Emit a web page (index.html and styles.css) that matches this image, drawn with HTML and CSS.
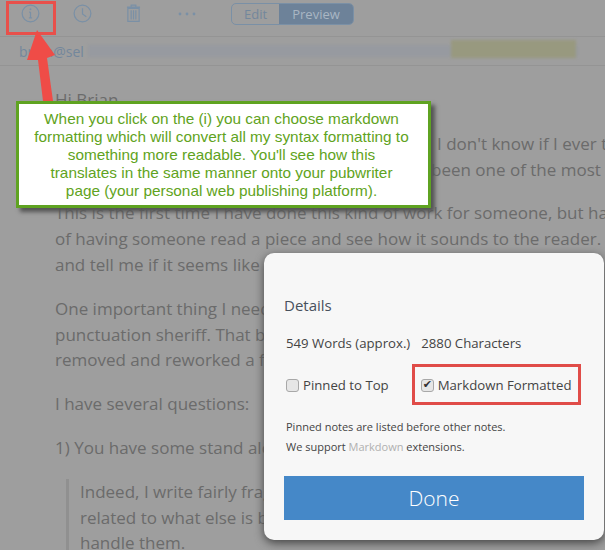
FILE: index.html
```html
<!DOCTYPE html>
<html lang="en">
<head>
  <meta charset="UTF-8" />
  <title>Note details</title>
  <link rel="stylesheet" href="styles.css">
</head>
<body>
  <div class="page">
    <!-- toolbar -->
    <div class="toolbar">
      <svg class="icon icon-info" viewBox="0 0 20 20"><circle cx="10" cy="10" r="8.8"/><path d="M10 8.5v6M8.3 14.5h3.4M8.5 8.5H10"/><circle class="dot" cx="10" cy="5.6" r="1"/></svg>
      <svg class="icon icon-clock" viewBox="0 0 20 20"><circle cx="10" cy="10" r="8.8"/><path d="M10 4.5V10.5L14 13.5"/></svg>
      <svg class="icon icon-trash" viewBox="0 0 16 20"><path d="M2 4.5h12V18.5H2zM1 3.2h14M5.5 3V1h5v2M5.5 6.5v10M8 6.5v10M10.5 6.5v10"/></svg>
      <svg class="icon icon-more" viewBox="0 0 18 4"><circle class="dot" cx="2" cy="2" r="1.4"/><circle class="dot" cx="9" cy="2" r="1.4"/><circle class="dot" cx="16" cy="2" r="1.4"/></svg>
      <div class="switch">
        <span class="switch-item">Edit</span>
        <span class="switch-item active">Preview</span>
      </div>
    </div>

    <!-- recipient row, address blurred out -->
    <div class="address">
      <span>brian@sel</span>
      <div class="smudge"><div class="highlight"></div></div>
    </div>

    <div class="note">
      <p>Hi Brian</p>
      <p><span class="tail">I don't know if I ever t</span><br><span class="tail tail-wide">been one of the most t</span></p>
      <p>This is the first time I have done this kind of work for someone, but ha<br>of having someone read a piece and see how it sounds to the reader.<br>and tell me if it seems like</p>
      <p>One important thing I need<br>punctuation sheriff. That be<br>removed and reworked a few</p>
      <p>I have several questions:</p>
      <p>1) You have some stand alone</p>
      <blockquote>Indeed, I write fairly fragmented<br>related to what else is being<br>handle them.</blockquote>
    </div>

    <!-- annotations on top of the screenshot -->
    <div class="mark mark-icon"></div>
    <svg class="arrow" viewBox="0 0 60 80"><path d="M37 30L55 55L47 58L53 101H43L38 60L27 60Z" transform="translate(0 -30)"/></svg>
    <div class="callout">When you click on the (i) you can choose markdown<br>formatting which will convert all my syntax formatting to<br>something more readable. You'll see how this<br>translates in the same manner onto your pubwriter<br>page (your personal web publishing platform).</div>

    <div class="modal">
      <h3>Details</h3>
      <div class="stats"><span>549 Words (approx.)</span><span>2880 Characters</span></div>
      <div class="options">
        <label class="option"><input type="checkbox">Pinned to Top</label>
        <label class="option option-marked"><input type="checkbox" checked>Markdown Formatted</label>
      </div>
      <div class="hint">Pinned notes are listed before other notes.<br>We support <a href="#">Markdown</a> extensions.</div>
      <button class="done">Done</button>
    </div>
  </div>
</body>
</html>
```

FILE: styles.css
```css
html, body { margin: 0; padding: 0; }
body { width: 605px; height: 550px; overflow: hidden; background: #9e9e9e; font-family: "Open Sans", sans-serif; }
.page { position: relative; width: 605px; height: 550px; overflow: hidden; }

.toolbar { display: flex; align-items: center; height: 37px; box-sizing: border-box; padding: 0 0 9px 21px; border-bottom: 1px solid #949494; }
.icon { fill: none; stroke: #7a90a6; stroke-width: 1.3; flex: none; }
.icon .dot { fill: #7a90a6; stroke: none; }
.icon-info, .icon-clock { width: 19px; height: 19px; }
.icon-clock { margin-left: 33px; }
.icon-trash { width: 15px; height: 19px; margin-left: 34px; }
.icon-more { width: 18px; height: 4px; margin-left: 37px; }
.switch { display: flex; margin-left: 35px; height: 22px; box-sizing: border-box; border: 1px solid #7a90a6; border-radius: 5px; overflow: hidden; font-size: 13px; line-height: 20px; }
.switch-item { width: 47px; text-align: center; color: #73879c; }
.switch-item.active { width: 74px; background: #6d8299; color: #a9b6c3; }

.address { display: flex; align-items: center; height: 28px; padding-left: 19px; border-bottom: 1px solid #949494; font-size: 14px; color: #73879c; }
.smudge { position: relative; flex: none; width: 490px; height: 12px; margin-left: 4px; background: #979aa0; filter: blur(1.5px); }
.highlight { position: absolute; left: 363px; top: -5px; width: 125px; height: 18px; background: #98997f; }

.note { padding: 21px 0 0 55px; font-size: 17px; line-height: 25.8px; color: #6b6b6b; white-space: nowrap; }
.note p { margin: 0 0 18px; }
.tail { padding-left: 382px; }
.tail-wide { padding-left: 376px; }
.note blockquote { margin: 0 0 0 11px; padding-left: 11px; border-left: 3px solid #909090; }

.mark { position: absolute; box-sizing: border-box; border: 3px solid #e8504b; }
.mark-icon { left: 6px; top: 1px; width: 50px; height: 34px; }
.arrow { position: absolute; left: 0; top: 30px; width: 60px; height: 80px; fill: #ef4c47; }

.callout { position: absolute; left: 16px; top: 101px; width: 415px; height: 107px; box-sizing: border-box; padding: 6px 4px 0 0; border: 3px solid #5fa321; background: #fff; box-shadow: 4px 4px 4px #555; color: #5fa321; font-family: "Liberation Sans", sans-serif; font-size: 15.35px; line-height: 18px; text-align: center; }

.modal { position: absolute; left: 264px; top: 253px; width: 340px; height: 287px; box-sizing: border-box; padding: 42px 20px 0; background: #f7f7f7; border-radius: 10px; box-shadow: 0 3px 10px #444; color: #444; }
.modal h3 { margin: 0; font-size: 15px; line-height: 20px; font-weight: 400; color: #47505c; }
.stats { display: flex; gap: 11px; margin: 18px 0 0 2px; font-size: 13.2px; line-height: 20px; }
.options { display: flex; margin-top: 22px; font-size: 13.2px; line-height: 20px; }
.option { display: flex; align-items: center; margin-left: 2px; }
.option input { appearance: none; position: relative; box-sizing: border-box; width: 13px; height: 13px; margin: 0 4px 0 0; border: 1px solid #a8a8a8; border-radius: 3px; background: #e6e6e6; }
.option input:checked::after { content: "\2714"; position: absolute; left: 1px; top: -3px; font-family: "DejaVu Sans", sans-serif; font-size: 11px; line-height: 16px; color: #333; }
.option-marked { position: relative; margin-left: 32px; }
.option-marked::after { content: ""; position: absolute; left: -9px; top: -11px; right: -10px; bottom: -10px; border: 3px solid #e04c48; }
.hint { margin: 22px 0 0 2px; font-size: 11px; line-height: 20px; }
.hint a { color: #b0b0b0; text-decoration: none; }
.done { display: block; width: 300px; height: 44px; margin-top: 19px; border: none; background: #4588c8; color: #fff; font-family: "Open Sans", sans-serif; font-size: 21px; font-weight: 300; }
```
